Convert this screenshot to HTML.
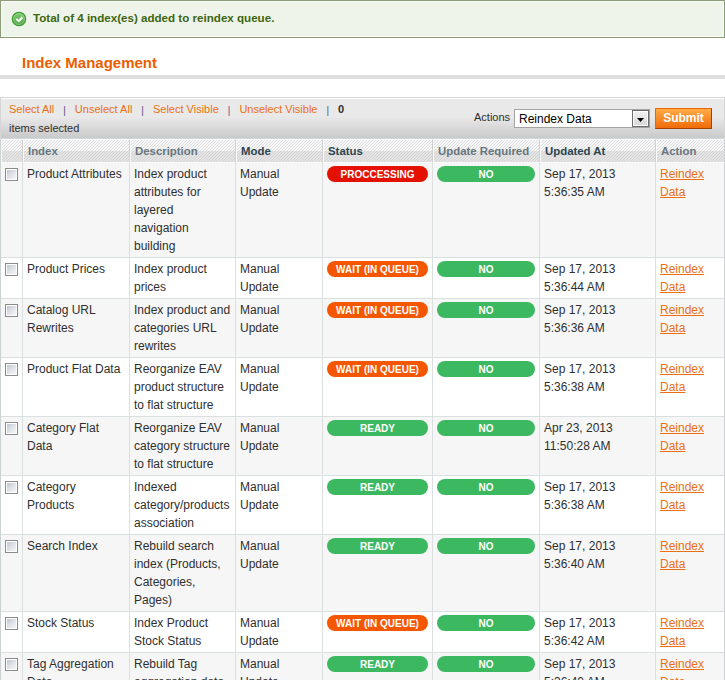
<!DOCTYPE html>
<html><head><meta charset="utf-8">
<style>
*{box-sizing:border-box;margin:0;padding:0}
html,body{width:725px;height:680px;overflow:hidden;background:#fff}
body{font-family:"Liberation Sans",sans-serif;font-size:12px;line-height:18px;color:#2f2f2f;position:relative}
.msg{position:absolute;left:0;top:0;width:725px;height:38px;border:1px solid #8c9c7a;background:#eff4ea;box-shadow:inset 1px 1px 0 #f7fbf4,inset -1px -1px 0 #f7fbf4}
.msg .txt{position:absolute;left:32px;top:8px;font-weight:bold;color:#3d6611;font-size:11.6px;line-height:18px}
.msg svg{position:absolute;left:9px;top:9px}
h3{position:absolute;left:22px;top:53px;font-size:15px;line-height:20px;color:#eb5e00;font-weight:bold}
.sep{position:absolute;left:0;top:75px;width:725px;height:4px;background:#dfdfdf}
.tb{position:absolute;left:0;top:97px;width:725px;height:42px;border:1px solid #d6d6d6;border-bottom:1px solid #cfd8da;background:linear-gradient(#e9e9e9 0,#e9e9e9 19px,#c9c9c9 40px);box-shadow:inset 0 1px 0 #fff}
.tb .l1{position:absolute;left:8px;top:2px;font-size:11px;line-height:18px;white-space:nowrap}
.tb a{color:#eb7015;text-decoration:none}
.tb .pipe{color:#5a4f85;display:inline-block;margin:0 9px;font-size:10px;position:relative;top:1px}
.tb .l2{position:absolute;left:8px;top:21px;font-size:11px;line-height:18px;color:#2f2f2f}
.tb .act{position:absolute;left:473px;top:10px;font-size:11px;line-height:18px;color:#2f2f2f}
.sel{position:absolute;left:513px;top:11px;width:136px;height:19px;border:1px solid #a3a3a3;background:#fff;font-size:12px;line-height:17px;padding:1px 0 0 4px;color:#000}
.sel .dd{position:absolute;right:0;top:0;width:17px;height:17px;border:1px solid #6d6d6d;background:linear-gradient(#f2f2f2,#d6d6d6);box-shadow:inset 0 0 0 1px #fff}
.sel .dd svg{position:absolute;left:4px;top:7px}
.btn{position:absolute;left:654px;top:10px;width:57px;height:21px;border:1px solid;border-color:#ed6502 #a04300 #a04300 #ed6502;background:linear-gradient(#ffac47,#f16b0a);color:#fff;font-weight:bold;font-size:12px;line-height:18px;text-align:center}
.grid{position:absolute;left:0;top:139px;width:725px;border-left:1px solid #cbd3d4}
.row{display:flex}
.c{border-right:1px solid #dadfe0;border-bottom:1px solid #dadfe0;padding:2px 4px;white-space:nowrap;position:relative}
.w1{width:22px}.w2{width:107px}.w3{width:106px}.w4{width:87px}.w5{width:110px}.w6{width:107px}.w7{width:116px}.w8{width:69px;border-right-color:#cbd3d4}
.hd .c{height:24px;border:1px solid #f9f9f9;border-right-color:#d1cfcf;padding:0 4px 0 4px;font-weight:bold;font-size:11.4px;line-height:22px;color:#67767e;background:transparent}
.hd .w8{border-right-color:#cbd3d4}
.hd{position:relative}
.stripes{position:absolute;left:0;top:1px;display:block}
.hd .dk{color:#2d444f}
.odd{background:#f6f6f6}
.even{background:#fff}
.cb{position:absolute;left:4px;top:5px;width:13px;height:13px;border:1px solid #8a8c8c;background:linear-gradient(135deg,#b9c0cb 0,#e2e5ea 55%,#f8f8f8 100%);box-shadow:inset 0 0 0 1px #fff}
.badge{display:block;height:16px;margin-top:1px;border-radius:8px;color:#fff;font-weight:bold;font-size:10px;line-height:18px;text-align:center}
.red{background:#e41101}.org{background:#f55600}.grn{background:#3cb861}
.lk{color:#eb7015;text-decoration:underline}
</style></head><body>
<div class="msg"><svg width="18" height="18" viewBox="0 0 18 18"><defs><linearGradient id="gg" x1="0" y1="0" x2="0" y2="1"><stop offset="0" stop-color="#80cc75"/><stop offset="1" stop-color="#4ea743"/></linearGradient></defs><circle cx="9" cy="9" r="6.6" fill="url(#gg)" stroke="#3a9a2e" stroke-width="1.3"/><circle cx="9" cy="9" r="5.5" fill="none" stroke="#c5e8bd" stroke-width="0.6" opacity="0.8"/><path d="M6.3 9 L8.8 11.2 L12.4 7.3" fill="none" stroke="#fff" stroke-width="2"/></svg><div class="txt">Total of 4 index(es) added to reindex queue.</div></div>
<h3>Index Management</h3>
<div class="sep"></div>
<div class="tb">
 <div class="l1"><a>Select All</a><span class="pipe">|</span><a>Unselect All</a><span class="pipe">|</span><a>Select Visible</a><span class="pipe">|</span><a>Unselect Visible</a><span class="pipe">|</span><b>0</b></div>
 <div class="l2">items selected</div>
 <div class="act">Actions</div>
 <div class="sel">Reindex Data<div class="dd"><svg width="7" height="4"><polygon points="0,0 7,0 3.5,4" fill="#000"/></svg></div></div>
 <div class="btn">Submit</div>
</div>
<div class="grid">
 <div class="row hd"><svg class="stripes" width="724" height="22"><defs><pattern id="pt" width="3" height="3" patternUnits="userSpaceOnUse"><rect width="3" height="3" fill="#f7f7f7"/><rect x="2" y="0" width="1" height="1" fill="#dedede"/><rect x="1" y="1" width="1" height="1" fill="#dedede"/><rect x="0" y="2" width="1" height="1" fill="#dedede"/></pattern><pattern id="pb" width="3" height="3" patternUnits="userSpaceOnUse"><rect width="3" height="3" fill="#e4e4e4"/><rect x="2" y="0" width="1" height="1" fill="#d3d3d3"/><rect x="1" y="1" width="1" height="1" fill="#d3d3d3"/><rect x="0" y="2" width="1" height="1" fill="#d3d3d3"/></pattern></defs><rect width="724" height="11" fill="url(#pt)"/><rect y="11" width="724" height="11" fill="url(#pb)"/></svg><div class="c w1"></div><div class="c w2">Index</div><div class="c w3">Description</div><div class="c w4 dk">Mode</div><div class="c w5 dk">Status</div><div class="c w6">Update Required</div><div class="c w7 dk">Updated At</div><div class="c w8">Action</div></div>
 <div class="row odd"><div class="c w1"><i class="cb"></i></div><div class="c w2">Product Attributes</div><div class="c w3">Index product<br>attributes for<br>layered<br>navigation<br>building</div><div class="c w4">Manual<br>Update</div><div class="c w5"><span class="badge red">PROCCESSING</span></div><div class="c w6"><span class="badge grn">NO</span></div><div class="c w7">Sep 17, 2013<br>5:36:35 AM</div><div class="c w8"><span class="lk">Reindex</span><br><span class="lk">Data</span></div></div>
 <div class="row even"><div class="c w1"><i class="cb"></i></div><div class="c w2">Product Prices</div><div class="c w3">Index product<br>prices</div><div class="c w4">Manual<br>Update</div><div class="c w5"><span class="badge org">WAIT (IN QUEUE)</span></div><div class="c w6"><span class="badge grn">NO</span></div><div class="c w7">Sep 17, 2013<br>5:36:44 AM</div><div class="c w8"><span class="lk">Reindex</span><br><span class="lk">Data</span></div></div>
 <div class="row odd"><div class="c w1"><i class="cb"></i></div><div class="c w2">Catalog URL<br>Rewrites</div><div class="c w3">Index product and<br>categories URL<br>rewrites</div><div class="c w4">Manual<br>Update</div><div class="c w5"><span class="badge org">WAIT (IN QUEUE)</span></div><div class="c w6"><span class="badge grn">NO</span></div><div class="c w7">Sep 17, 2013<br>5:36:36 AM</div><div class="c w8"><span class="lk">Reindex</span><br><span class="lk">Data</span></div></div>
 <div class="row even"><div class="c w1"><i class="cb"></i></div><div class="c w2">Product Flat Data</div><div class="c w3">Reorganize EAV<br>product structure<br>to flat structure</div><div class="c w4">Manual<br>Update</div><div class="c w5"><span class="badge org">WAIT (IN QUEUE)</span></div><div class="c w6"><span class="badge grn">NO</span></div><div class="c w7">Sep 17, 2013<br>5:36:38 AM</div><div class="c w8"><span class="lk">Reindex</span><br><span class="lk">Data</span></div></div>
 <div class="row odd"><div class="c w1"><i class="cb"></i></div><div class="c w2">Category Flat<br>Data</div><div class="c w3">Reorganize EAV<br>category structure<br>to flat structure</div><div class="c w4">Manual<br>Update</div><div class="c w5"><span class="badge grn">READY</span></div><div class="c w6"><span class="badge grn">NO</span></div><div class="c w7">Apr 23, 2013<br>11:50:28 AM</div><div class="c w8"><span class="lk">Reindex</span><br><span class="lk">Data</span></div></div>
 <div class="row even"><div class="c w1"><i class="cb"></i></div><div class="c w2">Category<br>Products</div><div class="c w3">Indexed<br>category/products<br>association</div><div class="c w4">Manual<br>Update</div><div class="c w5"><span class="badge grn">READY</span></div><div class="c w6"><span class="badge grn">NO</span></div><div class="c w7">Sep 17, 2013<br>5:36:38 AM</div><div class="c w8"><span class="lk">Reindex</span><br><span class="lk">Data</span></div></div>
 <div class="row odd"><div class="c w1"><i class="cb"></i></div><div class="c w2">Search Index</div><div class="c w3">Rebuild search<br>index (Products,<br>Categories,<br>Pages)</div><div class="c w4">Manual<br>Update</div><div class="c w5"><span class="badge grn">READY</span></div><div class="c w6"><span class="badge grn">NO</span></div><div class="c w7">Sep 17, 2013<br>5:36:40 AM</div><div class="c w8"><span class="lk">Reindex</span><br><span class="lk">Data</span></div></div>
 <div class="row even"><div class="c w1"><i class="cb"></i></div><div class="c w2">Stock Status</div><div class="c w3">Index Product<br>Stock Status</div><div class="c w4">Manual<br>Update</div><div class="c w5"><span class="badge org">WAIT (IN QUEUE)</span></div><div class="c w6"><span class="badge grn">NO</span></div><div class="c w7">Sep 17, 2013<br>5:36:42 AM</div><div class="c w8"><span class="lk">Reindex</span><br><span class="lk">Data</span></div></div>
 <div class="row odd"><div class="c w1"><i class="cb"></i></div><div class="c w2">Tag Aggregation<br>Data</div><div class="c w3">Rebuild Tag<br>aggregation data</div><div class="c w4">Manual<br>Update</div><div class="c w5"><span class="badge grn">READY</span></div><div class="c w6"><span class="badge grn">NO</span></div><div class="c w7">Sep 17, 2013<br>5:36:40 AM</div><div class="c w8"><span class="lk">Reindex</span><br><span class="lk">Data</span></div></div>
</div>
</body></html>
